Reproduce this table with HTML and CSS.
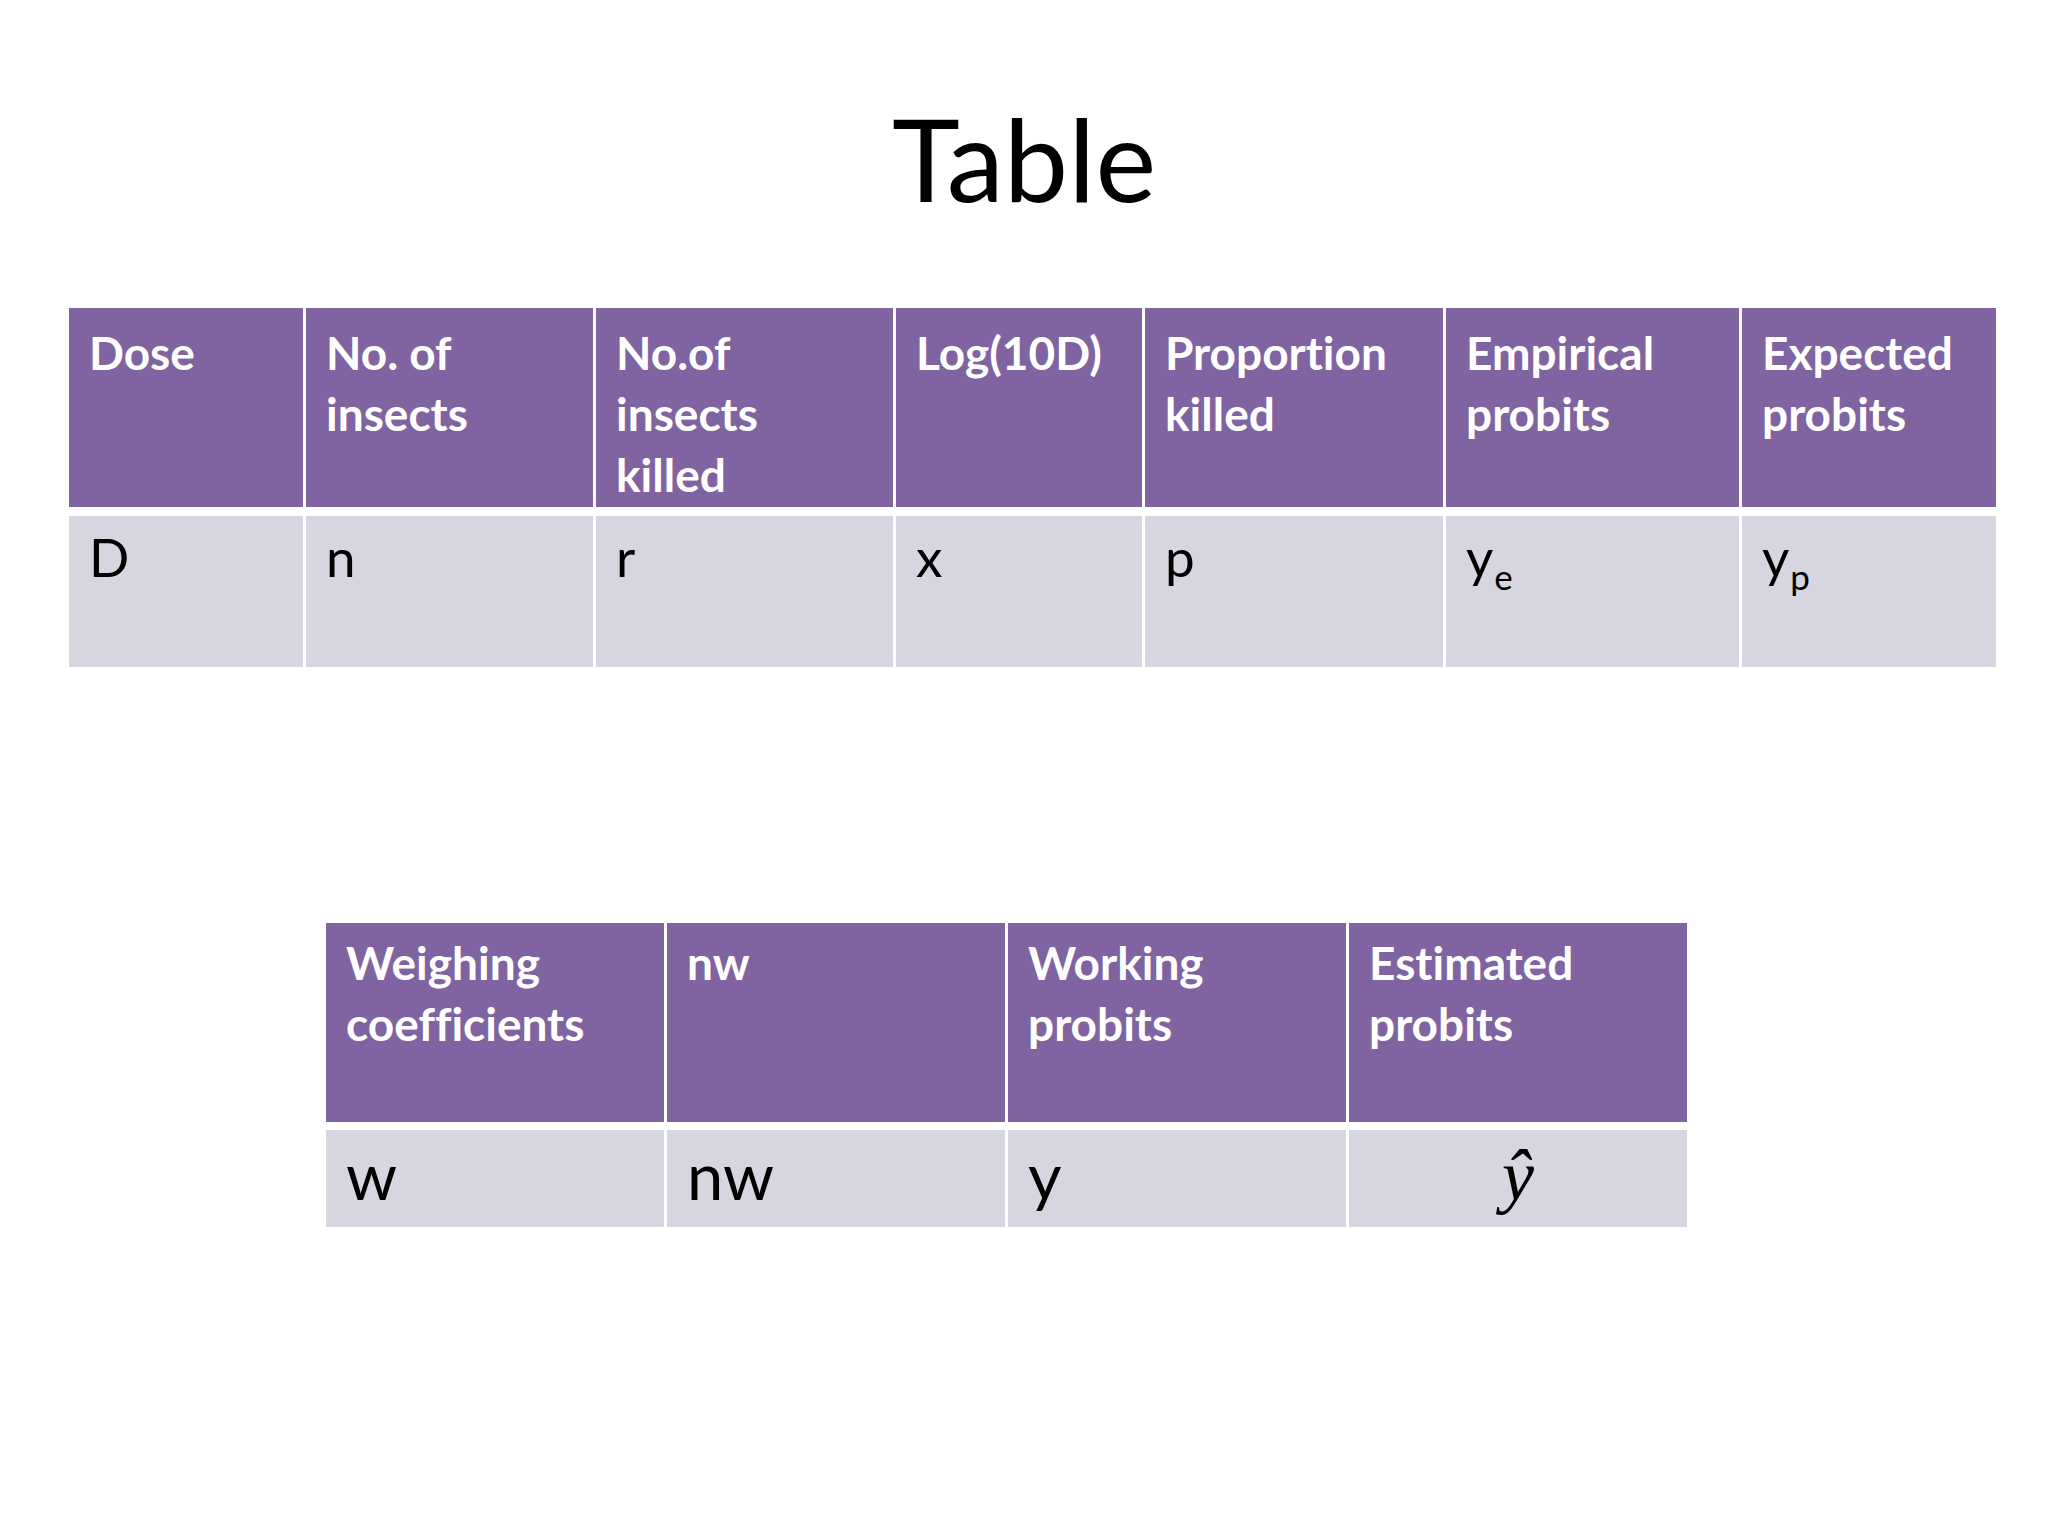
FILE: index.html
```html
<!DOCTYPE html>
<html lang="en">
<head>
<meta charset="utf-8">
<title>Table</title>
<link rel="stylesheet" href="styles.css">
</head>
<body>
<main class="slide">
  <h1 class="title">Table</h1>

  <div class="grid grid-main">
    <div class="cell head">Dose</div>
    <div class="cell head">No. of<br>insects</div>
    <div class="cell head">No.of<br>insects<br>killed</div>
    <div class="cell head">Log(10D)</div>
    <div class="cell head">Proportion<br>killed</div>
    <div class="cell head">Empirical<br>probits</div>
    <div class="cell head">Expected<br>probits</div>

    <div class="cell body">D</div>
    <div class="cell body">n</div>
    <div class="cell body">r</div>
    <div class="cell body">x</div>
    <div class="cell body">p</div>
    <div class="cell body">y<span class="sub">e</span></div>
    <div class="cell body">y<span class="sub">p</span></div>
  </div>

  <div class="grid grid-second">
    <div class="cell head2">Weighing<br>coefficients</div>
    <div class="cell head2">nw</div>
    <div class="cell head2">Working<br>probits</div>
    <div class="cell head2">Estimated<br>probits</div>

    <div class="cell body2">w</div>
    <div class="cell body2">nw</div>
    <div class="cell body2">y</div>
    <div class="cell body2 center"><span class="yhat">ŷ</span></div>
  </div>
</main>
</body>
</html>
```

FILE: styles.css
```css
html, body {
  margin: 0;
  padding: 0;
  background: #ffffff;
}

.slide {
  width: 2048px;
  height: 1536px;
  display: flex;
  flex-direction: column;
  align-items: flex-start;
  font-family: Lato, "Open Sans", "Liberation Sans", sans-serif;
  font-variant-ligatures: none;
  font-feature-settings: "liga" 0, "dlig" 0;
  color: #000000;
}

.title {
  align-self: stretch;
  margin: 100px 0 0 0;
  font-family: Lato, "Open Sans", sans-serif;
  font-weight: 400;
  font-size: 115px;
  line-height: 114px;
  text-align: center;
  color: #000000;
}

.grid {
  display: grid;
  column-gap: 3px;
}

.grid-main {
  margin: 94px 0 0 69px;
  grid-template-columns: 234px 287px 297px 246px 298px 293px 254px;
  grid-template-rows: 199px 151px;
  row-gap: 9px;
}

.grid-second {
  margin: 256px 0 0 326px;
  grid-template-columns: repeat(4, 338px);
  grid-template-rows: 199px 97px;
  row-gap: 8px;
}

.cell {
  box-sizing: border-box;
  padding-left: 20px;
  white-space: nowrap;
}

.head {
  background: #8064a2;
  color: #ffffff;
  font-weight: 700;
  font-size: 46px;
  line-height: 61px;
  padding-top: 14px;
}

.body {
  background: #d6d5e0;
  font-size: 53px;
  line-height: 60px;
  padding-top: 11px;
}

.sub {
  font-size: 35px;
  position: relative;
  top: 13px;
  margin-left: 1px;
}

.head2 {
  background: #8064a2;
  color: #ffffff;
  font-weight: 700;
  font-size: 46px;
  line-height: 61px;
  padding-top: 9px;
}

.body2 {
  background: #d6d5e0;
  font-size: 65px;
  line-height: 80px;
  padding-top: 5px;
}

.center {
  padding-left: 0;
  text-align: center;
}

.yhat {
  font-family: "Liberation Serif", "DejaVu Serif", serif;
  font-style: italic;
  font-size: 72px;
}
```
